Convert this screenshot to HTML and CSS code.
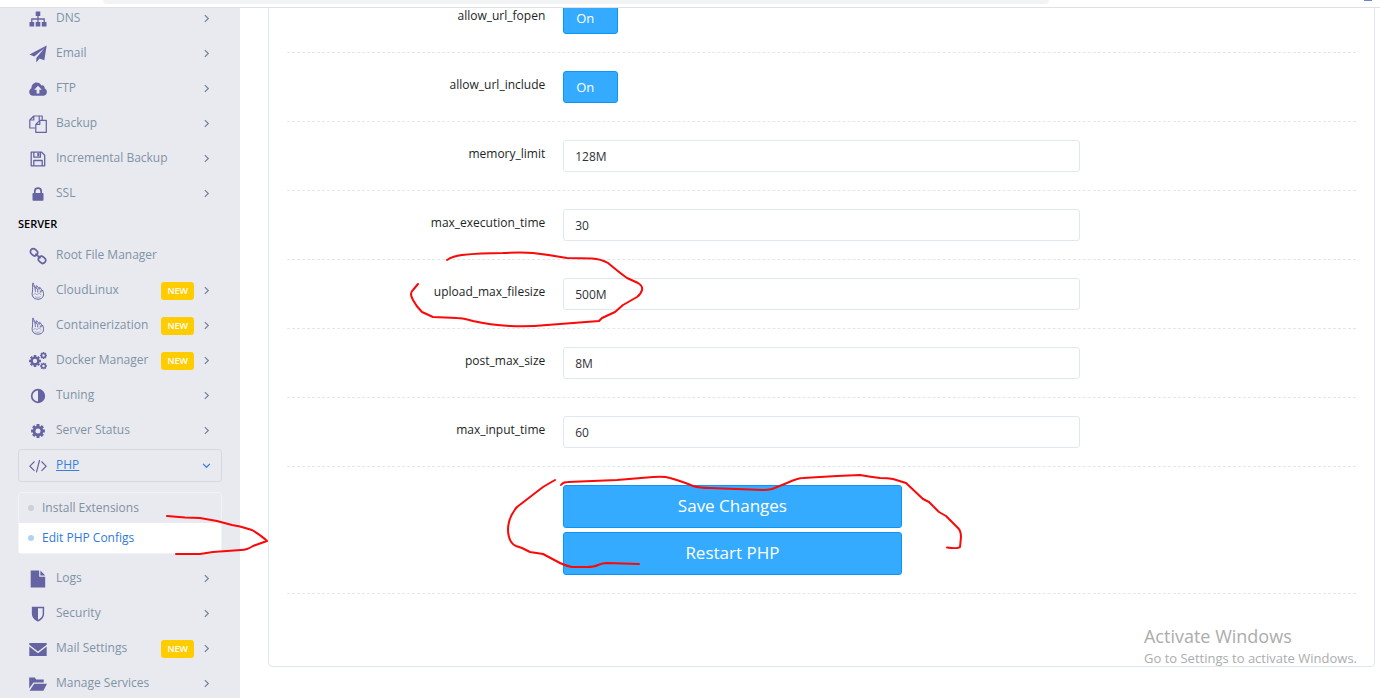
FILE: index.html
```html
<!DOCTYPE html>
<html lang="en">
<head>
<meta charset="utf-8">
<title>Edit PHP Configs</title>
<link rel="stylesheet" href="styles.css">
</head>
<body>
<svg class="defs" aria-hidden="true">
  <symbol id="chev" viewBox="0 0 8 8"><path d="M2.500 1 5.600 4 2.500 7" fill="none" stroke="currentColor" stroke-width="1.100"/></symbol>
  <symbol id="flame" viewBox="0 0 18 18"><path d="M4 .9C4.500 3 6.200 4.400 7.300 6.700c.6-.9.5-2 .2-3 1.500.9 2.400 2.200 2.700 3.700.6-.6.700-1.300.5-2.100 1.600 1.200 2.100 2.700 1.900 4.200.5-.2.8-.7.900-1.400 2.200 4.500 1 9-4.400 9.100-4.800.1-6.700-3.500-5.700-7.300C4 7.300 3.100 4 4 .9z" fill="none" stroke="currentColor" stroke-width="1"/><path d="M4.300 3.500c1.900 2.300 2.200 4.300 2.100 6.500M8.700 6.500l.1 4M11.400 8.500l-.2 2.200" fill="none" stroke="currentColor" stroke-width=".9"/><path d="M4.500 13c.8-2 2.300-2 3.300 0 1-2 3.300-2 4.500 0M6 14.500c1.500 1.200 4 1.200 5.500 0" fill="none" stroke="currentColor" stroke-width=".8" opacity=".6"/></symbol>
  <symbol id="gear" viewBox="1.500 1.500 15 15"><circle cx="9" cy="9" r="4.200" fill="none" stroke="currentColor" stroke-width="3"/><g stroke="currentColor" stroke-width="3.200"><path d="M9 1.600v2.400M9 14v2.400M1.600 9H4M14 9h2.400M3.770 3.770l1.600 1.600M12.630 12.630l1.600 1.600M3.770 14.230l1.600-1.600M12.630 5.370l1.600-1.600"/></g></symbol>
</svg>

<header class="browser-edge"><div class="address"></div><div class="avatar"></div></header>

<div class="page">
  <aside class="sidebar">
    <nav class="menu">
      <a class="item" href="#"><svg class="icon" viewBox="0 0 18 18"><path d="M6.700 1.500h4.600v4.600H6.700zM.5 12h4.700v4.500H.5zM6.700 12h4.600v4.500H6.700zM12.800 12h4.700v4.500h-4.700z" fill="currentColor"/><path d="M9 6v6M2.800 12V9h12.400v3" fill="none" stroke="currentColor" stroke-width="1.300"/></svg><span class="name">DNS</span><svg class="chevron"><use href="#chev"/></svg></a>
      <a class="item" href="#"><svg class="icon" viewBox="0 0 18 18"><path d="M17.700.600 15.300 15.300l-4.700-1.900-3.300 4V12.900L15.500 3 5.300 11.400.4 9.600z" fill="currentColor"/></svg><span class="name">Email</span><svg class="chevron"><use href="#chev"/></svg></a>
      <a class="item" href="#"><svg class="icon" viewBox="0 0 18 18"><path fill-rule="evenodd" d="M4.300 15.700C1.800 15.700.200 14 .200 11.900c0-1.700 1-3 2.300-3.600C2.300 5 4.700 2.500 7.600 2.500c2.200 0 3.900 1.200 4.700 3 2-.6 3.700.9 3.300 3 1.400.5 2.300 1.800 2.300 3.400 0 2.200-1.600 3.800-3.800 3.800zM9 5.700 5.200 9.800h2.400v3.700h2.800V9.800h2.400z" fill="currentColor"/></svg><span class="name">FTP</span><svg class="chevron"><use href="#chev"/></svg></a>
      <a class="item" href="#"><svg class="icon" viewBox="0 0 18 18"><g fill="none" stroke="currentColor" stroke-width="1.200" stroke-linejoin="round"><path d="M6.800 13H.8V5L4.800 1h5.400v4.300M4.800 1v4h-4"/><path d="M6.800 17.300V9.300l4-4h6.500v12zM10.800 5.300v4h-4M10.200 1h3v4"/></g></svg><span class="name">Backup</span><svg class="chevron"><use href="#chev"/></svg></a>
      <a class="item" href="#"><svg class="icon" viewBox="0 0 18 18"><g fill="none" stroke="currentColor" stroke-width="1.300" stroke-linejoin="round"><path d="M2.200 2.200h10.500l3 3v10.600H2.200zM4.800 2.500v4.700h6.600V2.500M4.800 15.500v-5h8.400v5"/></g><path d="M8.300 3h2v3.200h-2z" fill="currentColor"/></svg><span class="name">Incremental Backup</span><svg class="chevron"><use href="#chev"/></svg></a>
      <a class="item" href="#"><svg class="icon" viewBox="0 0 18 18"><rect x="3.500" y="8" width="11" height="7.800" rx=".8" fill="currentColor"/><path d="M5.800 8.500V6.400a3.200 3.200 0 0 1 6.400 0v2.100" fill="none" stroke="currentColor" stroke-width="1.700"/></svg><span class="name">SSL</span><svg class="chevron"><use href="#chev"/></svg></a>

      <h2 class="heading">SERVER</h2>

      <a class="item" href="#"><svg class="icon" viewBox="0 0 18 18"><g transform="rotate(43 9 9)" fill="none" stroke="currentColor" stroke-width="1.700"><rect x="-.3" y="6" width="7.600" height="6" rx="3"/><rect x="10.700" y="6" width="7.600" height="6" rx="3"/><path d="M5.500 9h7"/></g></svg><span class="name">Root File Manager</span></a>
      <a class="item" href="#"><svg class="icon"><use href="#flame"/></svg><span class="name">CloudLinux</span><span class="badge">NEW</span><svg class="chevron"><use href="#chev"/></svg></a>
      <a class="item" href="#"><svg class="icon"><use href="#flame"/></svg><span class="name">Containerization</span><span class="badge">NEW</span><svg class="chevron"><use href="#chev"/></svg></a>
      <a class="item" href="#"><svg class="icon" viewBox="0 0 18 18"><use href="#gear" x="0" y="3" width="12" height="12"/><use href="#gear" x="11" y="0" width="7" height="7"/><use href="#gear" x="11" y="10.500" width="7" height="7"/></svg><span class="name">Docker Manager</span><span class="badge">NEW</span><svg class="chevron"><use href="#chev"/></svg></a>
      <a class="item" href="#"><svg class="icon" viewBox="0 0 18 18"><circle cx="9" cy="9" r="6.300" fill="none" stroke="currentColor" stroke-width="1.700"/><path d="M9 2.500a6.500 6.500 0 0 1 0 13z" fill="currentColor"/></svg><span class="name">Tuning</span><svg class="chevron"><use href="#chev"/></svg></a>
      <a class="item" href="#"><svg class="icon" viewBox="0 0 18 18"><use href="#gear" x="2" y="2" width="14" height="14"/></svg><span class="name">Server Status</span><svg class="chevron"><use href="#chev"/></svg></a>
      <a class="item open" href="#"><svg class="icon" viewBox="0 0 18 18"><path d="M5.500 4.500.9 9.200l4.600 4.600M12.500 4.500l4.600 4.700-4.600 4.600M10.600 3 7.400 15.400" fill="none" stroke="currentColor" stroke-width="1.200"/></svg><span class="name">PHP</span><svg class="chevron down"><use href="#chev"/></svg></a>
      <div class="submenu">
        <a class="subitem" href="#">Install Extensions</a>
        <a class="subitem current" href="#">Edit PHP Configs</a>
      </div>
      <a class="item" href="#"><svg class="icon" viewBox="0 0 18 18"><path d="M1.700.500h8.500v6.300h6v10.700H1.700zM11.400.500l4.800 5.100h-4.800z" fill="currentColor"/></svg><span class="name">Logs</span><svg class="chevron"><use href="#chev"/></svg></a>
      <a class="item" href="#"><svg class="icon" viewBox="0 0 18 18"><path d="M3.600 2.400h10.800v6.300c0 3.500-2.200 5.500-5.400 7-3.200-1.500-5.400-3.500-5.400-7z" fill="none" stroke="currentColor" stroke-width="1.500"/><path d="M9 2.400v13.300c-3.200-1.500-5.400-3.500-5.400-7V2.400z" fill="currentColor"/></svg><span class="name">Security</span><svg class="chevron"><use href="#chev"/></svg></a>
      <a class="item" href="#"><svg class="icon" viewBox="0 0 18 18"><path d="M.3 3h17.400v1.800L9 11.600.3 4.800zM.3 6.600 9 13.300l8.700-6.700V16H.3z" fill="currentColor"/></svg><span class="name">Mail Settings</span><span class="badge">NEW</span><svg class="chevron"><use href="#chev"/></svg></a>
      <a class="item" href="#"><svg class="icon" viewBox="0 0 18 18"><path d="M.2 13.200V2.500h5.600l1.400 2h7.500v3H4.500zM5.200 8.700H18l-3.600 7H.6z" fill="currentColor"/></svg><span class="name">Manage Services</span><svg class="chevron"><use href="#chev"/></svg></a>
    </nav>
  </aside>

  <main class="content">
    <form class="card">
      <div class="row"><label class="label" for="fopen">allow_url_fopen</label><div class="control"><button class="toggle" id="fopen" type="button">On</button></div></div>
      <div class="row"><label class="label" for="include">allow_url_include</label><div class="control"><button class="toggle" id="include" type="button">On</button></div></div>
      <div class="row"><label class="label" for="memory">memory_limit</label><div class="control"><input class="field" id="memory" type="text" value="128M"></div></div>
      <div class="row"><label class="label" for="exec">max_execution_time</label><div class="control"><input class="field" id="exec" type="text" value="30"></div></div>
      <div class="row"><label class="label" for="upload">upload_max_filesize</label><div class="control"><input class="field" id="upload" type="text" value="500M"></div></div>
      <div class="row"><label class="label" for="post">post_max_size</label><div class="control"><input class="field" id="post" type="text" value="8M"></div></div>
      <div class="row"><label class="label" for="inputtime">max_input_time</label><div class="control"><input class="field" id="inputtime" type="text" value="60"></div></div>
      <div class="row"><div class="label"></div><div class="control actions"><button class="action" type="submit">Save Changes</button><button class="action" type="button">Restart PHP</button></div></div>
    </form>
  </main>
</div>

<div class="activation"><p class="activation-title">Activate Windows</p><p class="activation-text">Go to Settings to activate Windows.</p></div>

<svg class="ink" width="1380" height="698" viewBox="0 0 1380 698" aria-hidden="true">
  <path d="M447 260 Q453 256 462 255 Q480 253 503 253 Q522 252 533 253 Q550 255 567 258 L592 258.500 Q601 259 608 263 Q620 273 627 278 L638 283 Q643 286 642 290 Q641 294 637 297 L623 305 L615 312 L602 318 L599 321 L547 325 Q528 327 510 326 Q490 325 473 321 Q463 318 457 318 L433 317 L422 312 Q416 306 413 300 Q409 293 413 290 L418 284"/>
  <path d="M555 480 Q548 484 543 487 L517 507 Q511 514 509 522 Q507 530 509 537 Q511 544 516 546 L522 548 L530 552 L543 554 L560 563 Q566 566 572 567 L587 567 Q594 567 598 565 Q603 563 607 563 L639 564"/>
  <path d="M561 485 Q563 482 568 482 L617 480 L653 477 Q664 476 670 478 Q684 482 693 486 Q700 488 710 488 L763 490 Q768 490 772 489 L787 483 Q798 478 803 478 L837 476 L860 475 Q871 477 880 478 Q888 478 893 479 L906 483 L923 499 L929 502 L939 512 L946 516 L958 528 Q961 531 961 537 L960 547 Q958 549 947 547.500"/>
  <path d="M167 516 L185 517.500 L200 518 L217 521 L232 525 L240 526.500 L252 530 Q262 536 267 541 L253 546 Q247 550 241 550 L213 552 L200 554 L176 554"/>
</svg>
</body>
</html>
```
FILE: styles.css
```css
* { box-sizing: border-box; }

body {
  margin: 0;
  height: 100vh;
  display: flex;
  flex-direction: column;
  overflow: hidden;
  position: relative;
  background: #fff;
  font-family: "Open Sans", "Noto Sans", sans-serif;
  font-size: 12px;
}

.defs { position: absolute; width: 0; height: 0; }

.browser-edge {
  flex: none;
  height: 8px;
  display: flex;
  align-items: flex-start;
  justify-content: space-between;
  padding: 0 8px 0 103px;
  border-bottom: 1px solid #dfe1e4;
}
.address { width: 946px; height: 4px; border-radius: 0 0 8px 8px; background: #f1f3f4; }
.avatar { width: 8px; height: 1px; background: #6f86c8; }

.page { flex: 1; min-height: 0; display: flex; overflow: hidden; }

.sidebar { flex: none; width: 240px; padding: 0 18px; overflow: hidden; background: #e9eaf0; }
.menu { display: flex; flex-direction: column; gap: 2px; margin-top: -6px; }
.item {
  flex: none;
  display: flex;
  align-items: center;
  height: 33px;
  width: 204px;
  padding: 0 10px;
  border: 1px solid transparent;
  border-radius: 3px;
  color: #8093a5;
  text-decoration: none;
}
.icon { flex: none; width: 18px; height: 18px; margin-right: 9px; color: #6563a1; }
.name { flex: 1; padding-bottom: 2px; white-space: nowrap; }
.badge {
  height: 18px;
  margin-right: 8px;
  padding: 0 6px;
  border-radius: 3px;
  background: #fc0;
  color: #fff;
  font-size: 9px;
  font-weight: 600;
  line-height: 18px;
}
.chevron { flex: none; width: 9px; height: 9px; color: #74849a; }
.down { transform: rotate(90deg); color: #3a82dc; }
.open { border-color: #d6d8df; color: #3a7fd8; }
.open .name { text-decoration: underline; }

.heading { margin: 0; color: #000; font-size: 11px; font-weight: 600; line-height: 24px; padding-bottom: 1px; }

.submenu {
  flex: none;
  width: 204px;
  margin: 8px 0 6px;
  border: 1px solid #f2f3f7;
  border-radius: 3px;
}
.subitem {
  display: flex;
  align-items: center;
  gap: 8px;
  height: 30px;
  padding: 0 9px 1px;
  color: #8290a0;
  text-decoration: none;
}
.subitem::before { content: ""; width: 6px; height: 6px; border-radius: 50%; background: #cbd0db; }
.current { background: #fff; color: #3079da; }
.current::before { background: #b0d3f4; }

.content { flex: 1; min-width: 0; padding: 0 5px 0 28px; }
.card {
  margin-top: -25px;
  padding: 0 18px 72px;
  border: 1px solid #dfe8f1;
  border-radius: 4px;
}
.row { display: flex; padding: 18px 0; border-bottom: 1px dashed #dfe8f1; }
.label {
  width: 25%;
  padding: 5px 9px 0 0;
  color: #1c1f26;
  line-height: 18px;
  text-align: right;
}
.control { width: 50%; padding: 0 9px; }
.field, .toggle { display: block; height: 32px; border-radius: 3px; font: inherit; }
.field { width: 100%; padding: 0 11px; border: 1px solid #dfe8f1; background: #fff; color: #2f3237; }
.toggle {
  width: 55px;
  padding: 0 12px;
  border: 1px solid #0b94fb;
  background: #35abff;
  color: #fff;
  font-size: 13px;
  text-align: left;
}
.actions { width: 33.333%; display: flex; flex-direction: column; gap: 4px; }
.action {
  height: 43px;
  padding: 0 12px 2px;
  border: 1px solid #0b94fb;
  border-radius: 3px;
  background: #35abff;
  color: #fff;
  font: inherit;
  font-size: 17px;
}

.activation { position: absolute; right: 23px; bottom: 30px; color: #acacac; }
.activation-title, .activation-text { margin: 0; white-space: nowrap; }
.activation-title { font-size: 18px; line-height: 24px; }
.activation-text { font-size: 13px; line-height: 20px; }

.ink { position: absolute; left: 0; top: 0; fill: none; stroke: #fb0808; stroke-width: 2; stroke-linecap: round; stroke-linejoin: round; pointer-events: none; }
```
